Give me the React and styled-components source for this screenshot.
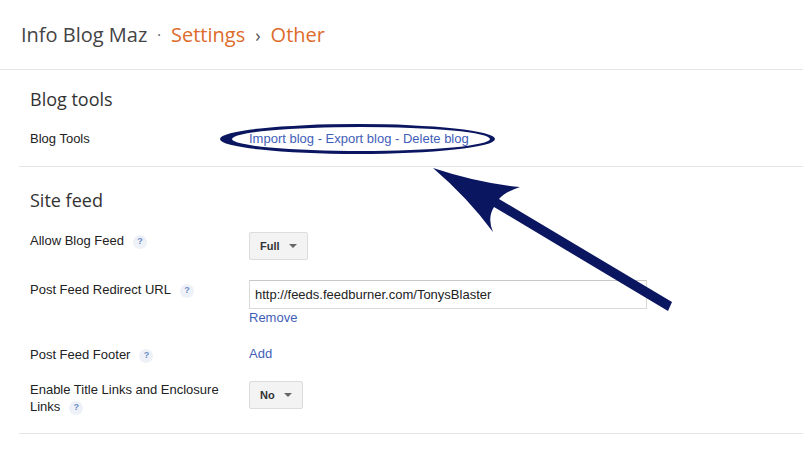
import React from 'react';
import styled, { createGlobalStyle } from 'styled-components';

const GlobalStyle = createGlobalStyle`
  html, body {
    margin: 0;
    padding: 0;
    background: #fff;
  }
  body {
    font-family: Arial, "Liberation Sans", sans-serif;
    font-size: 13px;
    color: #222;
  }
`;

const Page = styled.div`
  position: relative;
  width: 803px;
  height: 452px;
  overflow: hidden;
  background: #fff;
`;

const Header = styled.div`
  height: 69px;
  border-bottom: 1px solid #e5e5e5;
  display: flex;
  align-items: center;
  padding-left: 21px;
  font-family: "Open Sans", sans-serif;
  font-size: 20px;
  color: #444;
  gap: 10px;
`;

const Crumb = styled.span`
  color: ${props => (props.$link ? '#dd6b2c' : '#444')};
`;

const Sep = styled.span`
  color: #555;
  font-size: ${props => (props.$small ? '14px' : '18px')};
`;

const Section = styled.div`
  margin-left: 19px;
  padding: ${props => props.$pad || '16px 0 12px 11px'};
  border-bottom: 1px solid #e5e5e5;
`;

const Heading = styled.h2`
  margin: 0;
  font-family: "Open Sans", sans-serif;
  font-weight: 400;
  font-size: 18px;
  line-height: 26px;
  color: #333;
`;

const Row = styled.div`
  display: grid;
  grid-template-columns: 219px 1fr;
  align-items: start;
  justify-items: start;
  margin-top: ${props => props.$mt || 0}px;
`;

const Label = styled.div`
  line-height: 17px;
  padding-top: ${props => props.$pt || 0}px;
  max-width: 200px;
`;

const Help = styled.span`
  display: inline-flex;
  align-items: center;
  justify-content: center;
  width: 14px;
  height: 14px;
  border-radius: 50%;
  background: #eef1f7;
  color: #6c8cc8;
  font-size: 9px;
  font-weight: bold;
  margin-left: 9px;
  vertical-align: 1px;
`;

const Link = styled.a`
  color: #3f5eb8;
  text-decoration: none;
  cursor: pointer;
  margin-top: ${props => props.$mt || 0}px;
`;

const Links = styled.div`
  line-height: 17px;
  color: #3f5eb8;
`;

const Select = styled.div`
  display: inline-flex;
  align-items: center;
  gap: 9px;
  height: 26px;
  padding: 0 10px;
  background: #f3f3f3;
  border: 1px solid #dcdcdc;
  border-radius: 2px;
  font-size: 11px;
  font-weight: bold;
  color: #333;
`;

const Caret = styled.span`
  width: 0;
  height: 0;
  border-left: 4px solid transparent;
  border-right: 4px solid transparent;
  border-top: 4px solid #666;
`;

const Field = styled.div`
  display: flex;
  flex-direction: column;
  align-items: flex-start;
`;

const Input = styled.div`
  box-sizing: border-box;
  width: 398px;
  height: 29px;
  border: 1px solid #d9d9d9;
  border-top-color: #c8c8c8;
  padding: 0 5px;
  display: flex;
  align-items: center;
  font-size: 13px;
  color: #222;
`;

const Overlay = styled.svg`
  position: absolute;
  left: 0;
  top: 0;
  pointer-events: none;
`;

export default function App() {
  return (
    <Page>
      <GlobalStyle />
      <Header>
        <Crumb>Info Blog Maz</Crumb>
        <Sep $small>·</Sep>
        <Crumb $link>Settings</Crumb>
        <Sep>›</Sep>
        <Crumb $link>Other</Crumb>
      </Header>

      <Section $pad="16px 0 19px 11px">
        <Heading>Blog tools</Heading>
        <Row $mt={18}>
          <Label>Blog Tools</Label>
          <Links>
            <Link>Import blog</Link> - <Link>Export blog</Link> - <Link>Delete blog</Link>
          </Links>
        </Row>
      </Section>

      <Section $pad="20px 0 18px 11px">
        <Heading>Site feed</Heading>
        <Row $mt={19}>
          <Label>Allow Blog Feed<Help>?</Help></Label>
          <Select>Full<Caret /></Select>
        </Row>
        <Row $mt={20}>
          <Label $pt={1}>Post Feed Redirect URL<Help>?</Help></Label>
          <Field>
            <Input>http://feeds.feedburner.com/TonysBlaster</Input>
            <Link $mt={1}>Remove</Link>
          </Field>
        </Row>
        <Row $mt={21}>
          <Label>Post Feed Footer<Help>?</Help></Label>
          <Link>Add</Link>
        </Row>
        <Row $mt={18}>
          <Label>Enable Title Links and Enclosure Links<Help>?</Help></Label>
          <Select>No<Caret /></Select>
        </Row>
      </Section>

      <Overlay width="803" height="452" viewBox="0 0 803 452">
        <path
          fillRule="evenodd"
          fill="#0b1660"
          d="M220,139 a137.5,15 0 1,0 275,0 a137.5,15 0 1,0 -275,0 Z M232,139 a129,12 0 1,0 258,0 a129,12 0 1,0 -258,0 Z"
        />
        <path
          fill="#0b1660"
          d="M433,168 Q478,183 520,187 Q505,192 499,199 L672,302 L668,311 L494,207 Q487,218 493,232 Q468,198 433,168 Z"
        />
      </Overlay>
    </Page>
  );
}
